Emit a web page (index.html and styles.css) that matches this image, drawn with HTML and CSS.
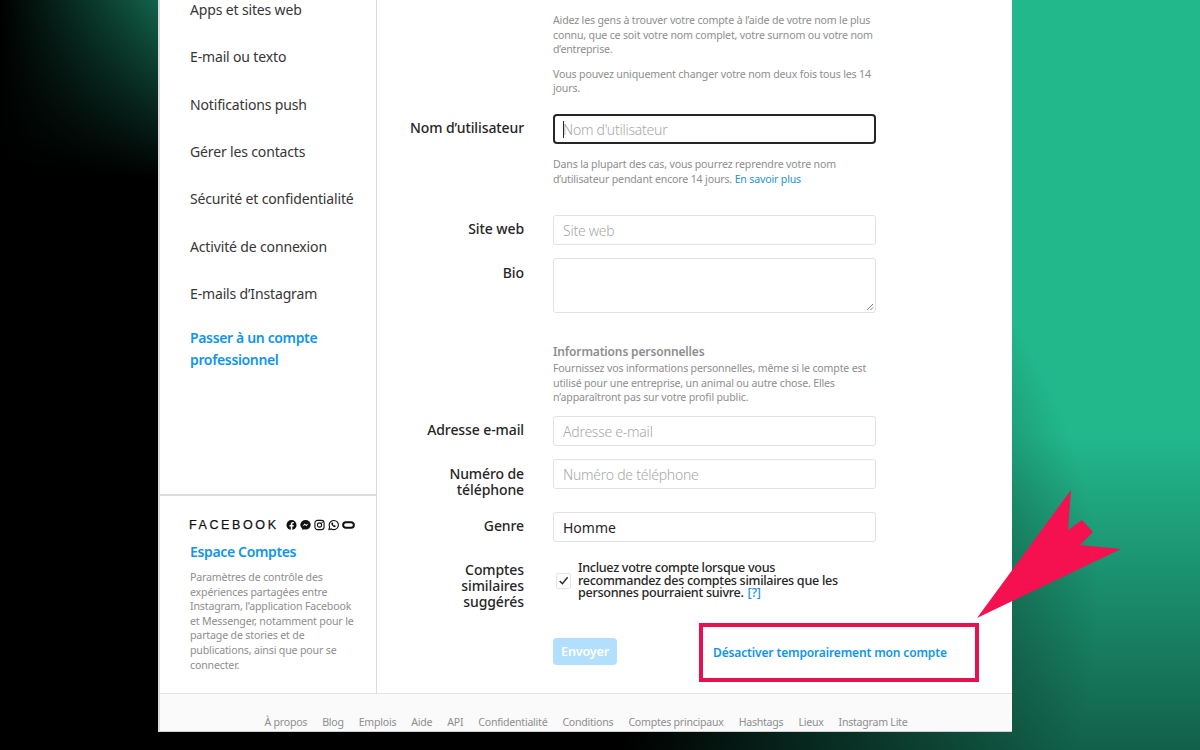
FILE: index.html
```html
<!DOCTYPE html>
<html lang="fr">
<head>
<meta charset="utf-8">
<title>Modifier le profil</title>
<link rel="stylesheet" href="styles.css">
</head>
<body>
<div class="card">
  <div class="top">
    <aside class="side">
      <nav class="side-nav">
        <a class="nav-item">Apps et sites web</a>
        <a class="nav-item">E-mail ou texto</a>
        <a class="nav-item">Notifications push</a>
        <a class="nav-item">Gérer les contacts</a>
        <a class="nav-item">Sécurité et confidentialité</a>
        <a class="nav-item">Activité de connexion</a>
        <a class="nav-item">E-mails d’Instagram</a>
        <a class="nav-pro">Passer à un compte professionnel</a>
      </nav>
      <div class="accounts">
        <div class="fb-row">
          <span class="fb-word">FACEBOOK</span>
          <span class="fb-icons">
            <svg class="fb-icon" viewBox="0 0 12 12"><circle cx="6" cy="6" r="5.5"/><path class="cut" d="M6.9 11.5V7.6h1.3l.3-1.6H6.9V5c0-.5.2-.8.8-.8h.8V2.8C8.2 2.7 7.8 2.7 7.4 2.7 6 2.7 5.2 3.5 5.2 4.9V6H3.8v1.6h1.4v3.9z"/></svg>
            <svg class="fb-icon" viewBox="0 0 12 12"><ellipse cx="6" cy="5.8" rx="5.7" ry="5.2"/><path d="M2.5 8.5v3l2.5-1.3z"/><path class="cut" d="M2.8 7.4 5 4.4l1.6 1.3 2.6-1.3-2.2 3-1.6-1.3z"/></svg>
            <svg class="fb-icon" viewBox="0 0 12 12"><rect class="line" x="1" y="1" width="10" height="10" rx="2.8"/><circle class="line" cx="6" cy="6" r="2.3"/><circle cx="8.8" cy="3.2" r=".7"/></svg>
            <svg class="fb-icon" viewBox="0 0 12 12"><path class="line" d="M1 11l.8-2.8A5 5 0 1 1 3.7 10.3z"/><path d="M4.2 3.4c-.8.6-.7 1.7.2 3s2.2 2.1 3.1 1.9c.7-.2 1.1-.8.9-1.2L7.3 5.9l-.6.6c-.6-.2-1.1-.8-1.4-1.4l.5-.6-.7-1.2z"/></svg>
            <svg class="fb-icon wide" viewBox="0 0 14 12"><rect class="thick" x="1.2" y="3" width="11.6" height="6" rx="3"/></svg>
          </span>
        </div>
        <a class="accounts-title">Espace Comptes</a>
        <p class="accounts-text">Paramètres de contrôle des expériences partagées entre Instagram, l’application Facebook et Messenger, notamment pour le partage de stories et de publications, ainsi que pour se connecter.</p>
      </div>
    </aside>
    <main class="main">
      <div class="intro">
        <p class="help">Aidez les gens à trouver votre compte à l’aide de votre nom le plus connu, que ce soit votre nom complet, votre surnom ou votre nom d’entreprise.</p>
        <p class="help gap-p">Vous pouvez uniquement changer votre nom deux fois tous les 14 jours.</p>
      </div>
      <div class="row row-user">
        <label class="label">Nom d’utilisateur</label>
        <div class="field focus"><span class="caret"></span><span class="ph">Nom d'utilisateur</span></div>
      </div>
      <div class="row row-help">
        <span></span>
        <p class="help">Dans la plupart des cas, vous pourrez reprendre votre nom d’utilisateur pendant encore 14 jours. <a class="link">En savoir plus</a></p>
      </div>
      <div class="row row-site">
        <label class="label">Site web</label>
        <div class="field"><span class="ph">Site web</span></div>
      </div>
      <div class="row row-bio">
        <label class="label">Bio</label>
        <div class="field area">
          <svg class="grip" viewBox="0 0 8 8"><path d="M1 7 7 1M4.5 7 7 4.5"/></svg>
        </div>
      </div>
      <div class="row row-info">
        <span></span>
        <div>
          <h2 class="info-title">Informations personnelles</h2>
          <p class="help">Fournissez vos informations personnelles, même si le compte est utilisé pour une entreprise, un animal ou autre chose. Elles n’apparaîtront pas sur votre profil public.</p>
        </div>
      </div>
      <div class="row row-mail">
        <label class="label">Adresse e-mail</label>
        <div class="field"><span class="ph">Adresse e-mail</span></div>
      </div>
      <div class="row row-tel">
        <label class="label label-tel">Numéro de téléphone</label>
        <div class="field"><span class="ph">Numéro de téléphone</span></div>
      </div>
      <div class="row row-genre">
        <label class="label">Genre</label>
        <div class="field"><span class="val">Homme</span></div>
      </div>
      <div class="row row-sim">
        <label class="label label-narrow">Comptes similaires suggérés</label>
        <div class="check-row">
          <span class="check"><svg viewBox="0 0 12 12"><path d="M2.5 6.5 5 9l4.8-6"/></svg></span>
          <span class="check-text">Incluez votre compte lorsque vous recommandez des comptes similaires que les personnes pourraient suivre. <a class="link hint">[?]</a></span>
        </div>
      </div>
      <div class="row row-send">
        <span></span>
        <div class="send-line">
          <button class="send" type="button">Envoyer</button>
          <div class="highlight"><a class="deactivate">Désactiver temporairement mon compte</a></div>
        </div>
      </div>
    </main>
  </div>
  <footer class="foot">
    <a>À propos</a><a>Blog</a><a>Emplois</a><a>Aide</a><a>API</a><a>Confidentialité</a><a>Conditions</a><a>Comptes principaux</a><a>Hashtags</a><a>Lieux</a><a>Instagram Lite</a>
  </footer>
</div>
<svg class="arrow" viewBox="0 0 1200 750"><polygon points="1071,490 1068,530 1082,520 1093,532 1080,545 1121,549 977,618"/></svg>
</body>
</html>
```
FILE: styles.css
```css
* { box-sizing: border-box; }
html, body { margin: 0; height: 750px; overflow: hidden; }
body {
  font-family: "Noto Sans", "Open Sans", sans-serif;
  color: #262626;
  background-color: #22b88c;
  background-image:
    linear-gradient(90deg, #000 0, rgba(0,0,0,0) 15%),
    radial-gradient(ellipse 1100px 720px at 0% 80%, #000 60%, rgba(0,0,0,0) 100%),
    linear-gradient(to top, rgba(0,0,0,.48) 0, rgba(0,0,0,0) 42%);
}
p, h2 { margin: 0; }
a { text-decoration: none; }

.card {
  width: 854px;
  height: 732px;
  margin-left: 158px;
  background: #fff;
  border-left: 2px solid #dbdbdb;
  display: flex;
  flex-direction: column;
}
.top { height: 536px; flex: 1; display: flex; border-bottom: 1px solid #e4e4e4; }

.side {
  width: 217px;
  border-right: 1px solid #dbdbdb;
  display: flex;
  flex-direction: column;
  justify-content: space-between;
}
.side-nav { padding-left: 30px; display: flex; flex-direction: column; }
.nav-item { height: 47.33px; line-height: 20px; font-size: 14px; letter-spacing: -.15px; color: #363636; }
.nav-pro { margin-top: -4px; width: 150px; font-size: 14px; font-weight: 600; letter-spacing: -.35px; line-height: 22px; color: #1095ec; }

.accounts { height: 199px; border-top: 2px solid #dbdbdb; padding: 21px 20px 0 29px; }
.fb-row { display: flex; align-items: center; height: 16px; }
.fb-word { font-family: "Liberation Sans", sans-serif; font-size: 12.5px; letter-spacing: 2.6px; color: #111; width: 97px; -webkit-text-stroke: .25px #111; }
.fb-icons { display: flex; gap: 3px; }
.fb-icon { width: 11px; height: 12px; fill: #111; }
.fb-icon.wide { width: 13px; }
.fb-icon .cut { fill: #fff; }
.fb-icon .line { fill: none; stroke: #111; stroke-width: 1.2; }
.fb-icon .thick { fill: none; stroke: #111; stroke-width: 2.2; }
.accounts-title { display: block; margin: 9px 0 0 1px; font-size: 14px; font-weight: 600; letter-spacing: -.35px; line-height: 20px; color: #1095ec; }
.accounts-text { margin: 8px 0 0 1px; font-size: 10.6px; letter-spacing: -.16px; line-height: 14.6px; color: #8e8e8e; }

.main { flex: 1; padding-top: 13px; }
.help { font-size: 10.6px; letter-spacing: -.17px; line-height: 14.6px; color: #8e8e8e; }
.gap-p { margin-top: 10px; }
.intro { margin-left: 176px; width: 328px; }

.row { display: grid; grid-template-columns: 147px 323px; column-gap: 29px; }
.label { text-align: right; font-size: 14px; font-weight: 500; letter-spacing: -.1px; line-height: 16px; color: #262626; }
.label-narrow { padding-left: 50px; }
.label-tel { padding-left: 60px; }
.field {
  height: 30px;
  display: flex;
  align-items: center;
  padding: 1px 9px 0;
  border: 1px solid #e2e2e2;
  border-radius: 3px;
  font-size: 14px;
  background: #fff;
}
.field.focus { border: 2px solid #262626; border-radius: 4px; padding: 1px 8px 0; position: relative; }
.caret { position: absolute; left: 8px; top: 5px; width: 1px; height: 17px; background: #262626; }
.ph { color: #a8a8a8; font-weight: 300; letter-spacing: -.25px; }
.val { color: #262626; }
.field.area { height: 55px; position: relative; }
.grip { position: absolute; right: 1px; bottom: 1px; width: 8px; height: 8px; fill: none; stroke: #777; stroke-width: 1; }

.row-user { margin-top: 18px; }
.row-user .label, .row-site .label, .row-mail .label { padding-top: 6px; }
.row-help { margin-top: 13px; }
.row-site { margin-top: 29px; }
.row-bio { margin-top: 13px; }
.row-bio .label { padding-top: 7px; }
.row-info { margin-top: 31px; }
.info-title { font-size: 12px; font-weight: 600; letter-spacing: -.15px; line-height: 16px; color: #8e8e8e; margin-bottom: 1px; }
.row-mail { margin-top: 11px; }
.row-tel { margin-top: 13px; }
.row-tel .label { padding-top: 7px; }
.row-genre { margin-top: 14px; }
.row-genre .label { padding-top: 6px; }
.row-sim { margin-top: 20px; }
.row-sim .label { padding-top: 0; }
.check-row { display: flex; gap: 7px; align-items: flex-start; }
.check { flex: none; margin: 11px 0 0 3px; width: 15px; height: 16px; border: 1px solid #e4e4e4; border-radius: 2px; display: flex; }
.check svg { width: 13px; height: 13px; fill: none; stroke: #262626; stroke-width: 1.3; }
.check-text { font-size: 12.6px; letter-spacing: -.3px; line-height: 12.7px; font-weight: 500; color: #262626; width: 280px; }
.link { color: #1e93d8; }
.hint { margin-left: 1px; }

.row-send { margin-top: 13px; }
.send-line { display: flex; align-items: center; }
.send {
  flex: none;
  width: 64px;
  height: 27px;
  margin-bottom: 2px;
  border: 0;
  border-radius: 4px;
  padding: 0;
  background: #b2dffc;
  color: #fff;
  font: 600 12.6px "Noto Sans", sans-serif;
  letter-spacing: -.2px;
}
.highlight {
  flex: none;
  width: 280px;
  height: 59px;
  margin-left: 82px;
  border: 4px solid #e5124f;
  padding-left: 10px;
  display: flex;
  align-items: center;
}
.deactivate { font-size: 12px; font-weight: 600; letter-spacing: -.14px; color: #1095ec; white-space: nowrap; }

.foot {
  height: 38px;
  flex: none;
  background: #fafafa;
  border-bottom: 1px solid #cfcfcf;
  display: flex;
  justify-content: center;
  align-items: flex-end;
  gap: 15px;
  padding-bottom: 1px;
  font-size: 10.6px;
  letter-spacing: -.25px;
  line-height: 16px;
  color: #8e8e8e;
}

.arrow { position: absolute; left: 0; top: 0; width: 1200px; height: 750px; fill: #f5104f; pointer-events: none; }
```
